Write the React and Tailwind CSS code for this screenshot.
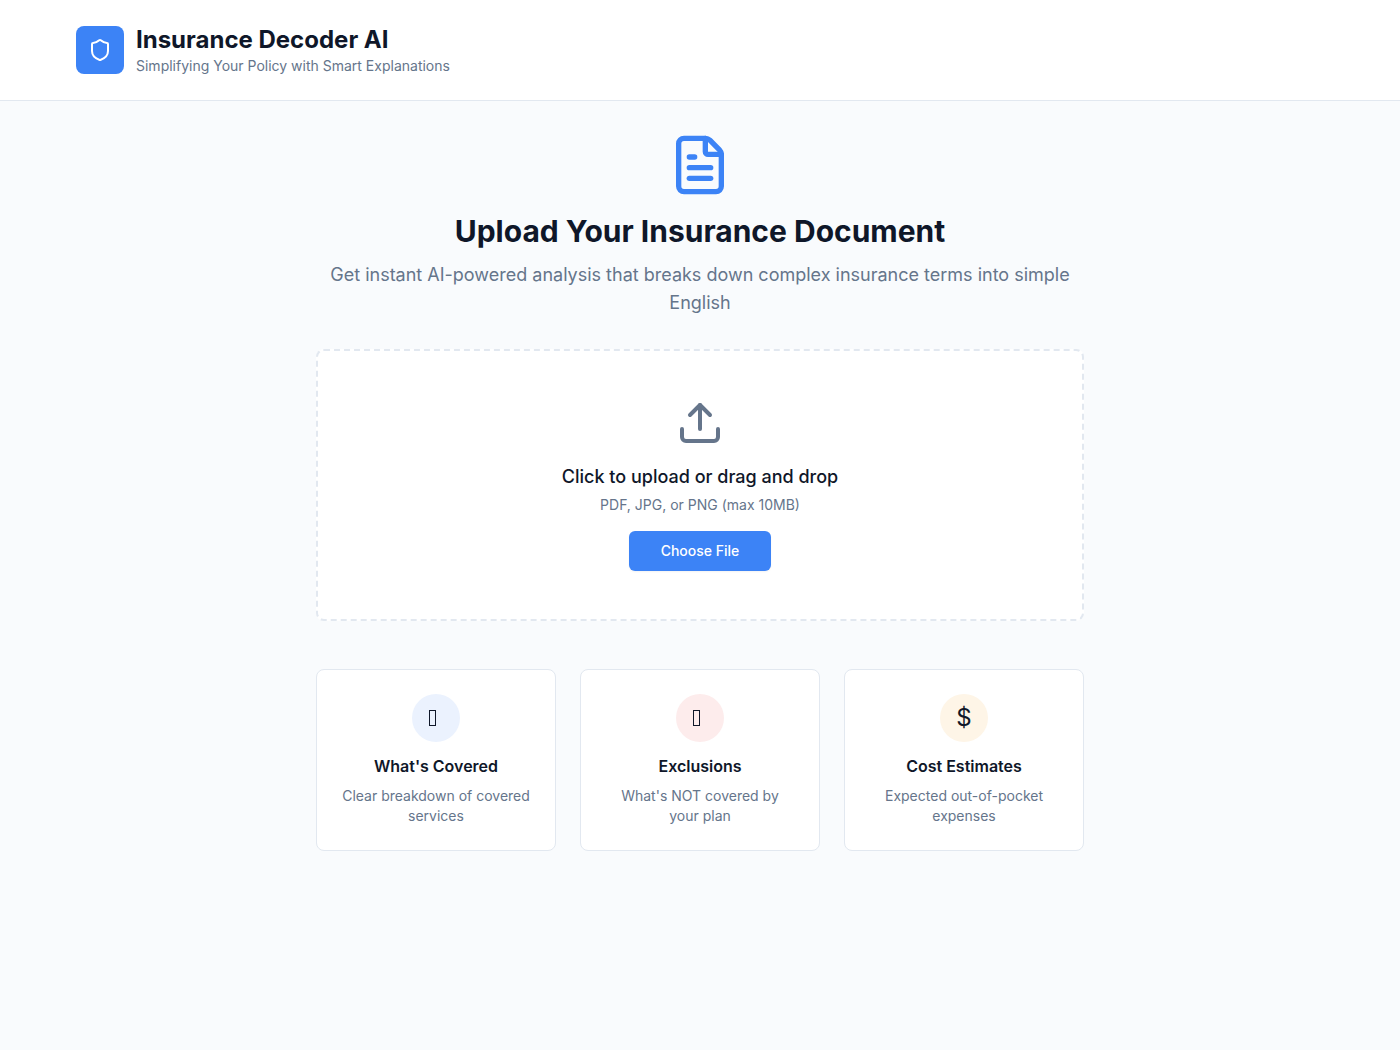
import { useRef, useState } from "react";
import { FileText, Shield, Upload } from "lucide-react";

function BoxGlyph() {
  return (
    <svg width="14" height="16" viewBox="0 0 14 16" fill="none" aria-hidden="true">
      <rect x="0.5" y="0.5" width="6" height="15" stroke="currentColor" />
    </svg>
  );
}

const features = [
  {
    icon: <BoxGlyph />,
    iconBg: "bg-[#ebf2fe]",
    title: "What's Covered",
    text: "Clear breakdown of covered services",
  },
  {
    icon: <BoxGlyph />,
    iconBg: "bg-[#fdecec]",
    title: "Exclusions",
    text: "What's NOT covered by your plan",
  },
  {
    icon: "$",
    iconBg: "bg-[#fef5e7]",
    title: "Cost Estimates",
    text: "Expected out-of-pocket expenses",
  },
];

function Header() {
  return (
    <header className="bg-white border-b border-[#e2e8f0]">
      <div className="max-w-7xl mx-auto px-4 py-6 flex items-center gap-3">
        <div className="w-12 h-12 rounded-lg bg-[#3c83f6] flex items-center justify-center">
          <Shield className="w-6 h-6 text-white" />
        </div>
        <div>
          <h1 className="text-2xl font-bold">Insurance Decoder AI</h1>
          <p className="text-sm text-[#65758b]">
            Simplifying Your Policy with Smart Explanations
          </p>
        </div>
      </div>
    </header>
  );
}

function UploadBox() {
  const [file, setFile] = useState(null);
  const inputRef = useRef(null);

  const handleDrop = (e) => {
    e.preventDefault();
    setFile(e.dataTransfer.files[0]);
  };

  return (
    <div
      onDrop={handleDrop}
      onDragOver={(e) => e.preventDefault()}
      className="bg-white border-2 border-dashed border-[#e2e8f0] rounded-lg p-12 flex flex-col items-center text-center"
    >
      <Upload className="w-12 h-12 mb-4 text-[#65758b]" />
      <p className="text-lg font-medium mb-1">
        {file ? file.name : "Click to upload or drag and drop"}
      </p>
      <p className="text-sm text-[#65758b] mb-4">PDF, JPG, or PNG (max 10MB)</p>
      <input
        ref={inputRef}
        type="file"
        accept=".pdf,.jpg,.jpeg,.png"
        aria-label="Insurance document"
        onChange={(e) => setFile(e.target.files[0])}
        className="hidden"
      />
      <button
        type="button"
        onClick={() => inputRef.current.click()}
        className="h-10 px-8 rounded-md bg-[#3c83f6] hover:bg-blue-600 text-white text-sm font-medium shadow-xs"
      >
        Choose File
      </button>
    </div>
  );
}

function FeatureCard({ icon, iconBg, title, text }) {
  return (
    <div className="bg-white border border-[#e2e8f0] rounded-lg p-6 text-center">
      <div
        className={`w-12 h-12 mx-auto mb-3 rounded-full flex items-center justify-center text-2xl ${iconBg}`}
      >
        {icon}
      </div>
      <h3 className="font-semibold mb-2">{title}</h3>
      <p className="text-sm text-[#65758b]">{text}</p>
    </div>
  );
}

function App() {
  return (
    <div className="min-h-screen bg-[#f9fbfd] text-[#0f1729] font-['Inter',sans-serif]">
      <Header />
      <main className="max-w-3xl mx-auto py-8">
        <div className="text-center mb-8">
          <FileText className="w-16 h-16 mx-auto mb-4 text-[#3c83f6]" />
          <h2 className="text-3xl font-bold mb-3">
            Upload Your Insurance Document
          </h2>
          <p className="text-lg text-[#65758b]">
            Get instant AI-powered analysis that breaks down complex insurance
            terms into simple English
          </p>
        </div>

        <UploadBox />

        <div className="grid grid-cols-1 md:grid-cols-3 gap-6 mt-12">
          {features.map((f) => (
            <FeatureCard key={f.title} {...f} />
          ))}
        </div>
      </main>
    </div>
  );
}

export default App;
